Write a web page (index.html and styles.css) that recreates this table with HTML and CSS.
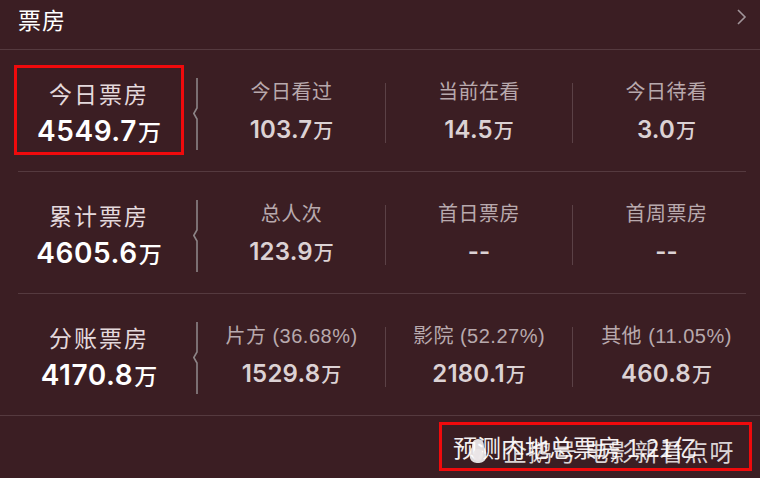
FILE: index.html
```html
<!DOCTYPE html>
<html lang="zh-CN">
<head>
  <meta charset="UTF-8" />
  <meta name="viewport" content="width=device-width, initial-scale=1" />
  <title>票房</title>
  <link rel="stylesheet" href="styles.css">
</head>
<body>
  <div class="card">
    <!-- Header -->
    <div class="header">
      <span class="title">票房</span>
      <svg class="chevron" width="12" height="18" viewBox="0 0 12 18">
        <polyline points="2,2 9,9 2,16" fill="none" stroke="#a1959a" stroke-width="1.6" />
      </svg>
    </div>

    <!-- Row 1 -->
    <div class="row">
      <div class="main">
        <div class="main-box highlight">
          <div class="main-label">今日票房</div>
          <div class="main-value">4549.7<span class="unit">万</span></div>
        </div>
      </div>
      <div class="brace">
        <svg width="8" height="72" viewBox="0 0 8 72">
          <path d="M4 0 V30 L0.8 35.5 L4 41 V72" fill="none" stroke="#8d8487" stroke-width="1.6" />
        </svg>
      </div>
      <div class="stat">
        <div class="stat-label">今日看过</div>
        <div class="stat-value">103.7<span class="unit">万</span></div>
      </div>
      <div class="stat">
        <div class="stat-label">当前在看</div>
        <div class="stat-value">14.5<span class="unit">万</span></div>
      </div>
      <div class="stat">
        <div class="stat-label">今日待看</div>
        <div class="stat-value">3.0<span class="unit">万</span></div>
      </div>
    </div>
    <div class="sep"></div>

    <!-- Row 2 -->
    <div class="row">
      <div class="main">
        <div class="main-box">
          <div class="main-label">累计票房</div>
          <div class="main-value">4605.6<span class="unit">万</span></div>
        </div>
      </div>
      <div class="brace">
        <svg width="8" height="72" viewBox="0 0 8 72">
          <path d="M4 0 V30 L0.8 35.5 L4 41 V72" fill="none" stroke="#8d8487" stroke-width="1.6" />
        </svg>
      </div>
      <div class="stat">
        <div class="stat-label">总人次</div>
        <div class="stat-value">123.9<span class="unit">万</span></div>
      </div>
      <div class="stat">
        <div class="stat-label">首日票房</div>
        <div class="stat-value">--</div>
      </div>
      <div class="stat">
        <div class="stat-label">首周票房</div>
        <div class="stat-value">--</div>
      </div>
    </div>
    <div class="sep"></div>

    <!-- Row 3 -->
    <div class="row">
      <div class="main">
        <div class="main-box">
          <div class="main-label">分账票房</div>
          <div class="main-value">4170.8<span class="unit">万</span></div>
        </div>
      </div>
      <div class="brace">
        <svg width="8" height="72" viewBox="0 0 8 72">
          <path d="M4 0 V30 L0.8 35.5 L4 41 V72" fill="none" stroke="#8d8487" stroke-width="1.6" />
        </svg>
      </div>
      <div class="stat">
        <div class="stat-label">片方 (36.68%)</div>
        <div class="stat-value">1529.8<span class="unit">万</span></div>
      </div>
      <div class="stat">
        <div class="stat-label">影院 (52.27%)</div>
        <div class="stat-value">2180.1<span class="unit">万</span></div>
      </div>
      <div class="stat">
        <div class="stat-label">其他 (11.05%)</div>
        <div class="stat-value">460.8<span class="unit">万</span></div>
      </div>
    </div>

    <!-- Footer -->
    <div class="footer">
      <div class="forecast">预测内地总票房 1.21亿</div>
      <div class="watermark">
        <svg class="penguin" width="20" height="26" viewBox="0 0 20 26">
          <path d="M10 1 C5 1 4 5 4 9 C2 12 1 16 2 20 C3 24 7 25 10 25 C13 25 17 24 18 20 C19 16 18 12 16 9 C16 5 15 1 10 1 Z" fill="rgba(255,255,255,0.85)" />
          <ellipse cx="10" cy="17" rx="5" ry="6" fill="rgba(235,230,232,0.9)" />
        </svg>
        <span>企鹅号 电影新看点呀</span>
      </div>
    </div>
  </div>
</body>
</html>
```

FILE: styles.css
```css
/* Page */
body {
  margin: 0;
  padding: 0;
  background: #3b1e23; /* dark maroon */
  font-family: "Liberation Sans", "Noto Sans CJK SC", sans-serif;
  color: #ffffff;
}

.card {
  width: 760px;
  height: 478px;
  overflow: hidden;
  position: relative;
}

/* Header */
.header {
  height: 49px;
  border-bottom: 1px solid #553a3f;
  display: flex;
  justify-content: space-between;
  align-items: center;
  padding: 0 12px 0 18px;
}

.title {
  font-family: "Noto Sans CJK SC", sans-serif;
  font-size: 23px;
  letter-spacing: 1px;
  color: #ffffff;
  margin-top: -12px;
}

.chevron {
  margin-top: -15px;
}

/* Data rows */
.row {
  height: 121px;
  display: grid;
  grid-template-columns: 194px 4px 187px 187px 188px;
  align-items: start;
}

.sep {
  height: 1px;
  background: #553a3f;
  margin: 0 14px 0 18px;
}

.main {
  display: flex;
  justify-content: center;
  padding-top: 15px;
  padding-left: 4px;
}

.main-box {
  width: 170px;
  height: 90px;
  box-sizing: border-box;
  border: 3px solid transparent;
  padding-top: 10px;
  text-align: center;
}

.main-box.highlight {
  border-color: #f00a0c; /* annotation box */
}

.main-label {
  font-family: "Noto Sans CJK SC", sans-serif;
  font-size: 23px;
  line-height: 30px;
  letter-spacing: 2px;
  color: #e4d9dc;
}

.main-value {
  margin-top: 5px;
  font-family: Inter, "Liberation Sans", sans-serif;
  font-size: 28px;
  line-height: 36px;
  font-weight: 600;
  letter-spacing: 0.6px;
  color: #ffffff;
}

.main-value .unit {
  font-family: "Noto Sans CJK SC", sans-serif;
  font-size: 23px;
  font-weight: 500;
  letter-spacing: 0;
  margin-left: 1px;
}

.brace {
  margin-top: 28px;
  height: 72px;
  margin-left: -1px;
}

.brace svg {
  display: block;
}

.stat {
  margin-top: 33px;
  height: 60px;
  text-align: center;
}

.stat + .stat {
  border-left: 1px solid #5b4146;
}

.stat-label {
  font-size: 20px;
  line-height: 18px;
  letter-spacing: 0.5px;
  color: #b8a9ad;
}

.stat-value {
  margin-top: 16px;
  font-family: Inter, "Liberation Sans", sans-serif;
  font-size: 24px;
  line-height: 26px;
  font-weight: 600;
  letter-spacing: 0.2px;
  color: #dcd2d4;
}

.stat-value .unit {
  font-family: "Noto Sans CJK SC", sans-serif;
  font-size: 20px;
  font-weight: 500;
  letter-spacing: 0;
  margin-left: 1px;
}

/* Footer */
.footer {
  border-top: 1px solid #553a3f;
  height: 62px;
  display: flex;
  justify-content: flex-end;
  align-items: flex-start;
  padding-right: 8px;
  position: relative;
}

.forecast {
  margin-top: 6px;
  width: 313px;
  height: 49px;
  box-sizing: border-box;
  border: 3px solid #f00a0c;
  padding: 7px 0 0 11px;
  font-family: "Noto Sans CJK SC", sans-serif;
  font-size: 24px;
  line-height: 30px;
  color: #f4eff0;
  white-space: nowrap;
}

/* Watermark laid over the footer */
.watermark {
  position: absolute;
  left: 468px;
  top: 20px;
  display: flex;
  align-items: center;
  gap: 15px;
  color: rgba(255, 255, 255, 0.82);
  font-family: "Noto Sans CJK SC", sans-serif;
  font-size: 24px;
  line-height: 30px;
  letter-spacing: 1px;
  white-space: nowrap;
}

.penguin {
  display: block;
}
```
